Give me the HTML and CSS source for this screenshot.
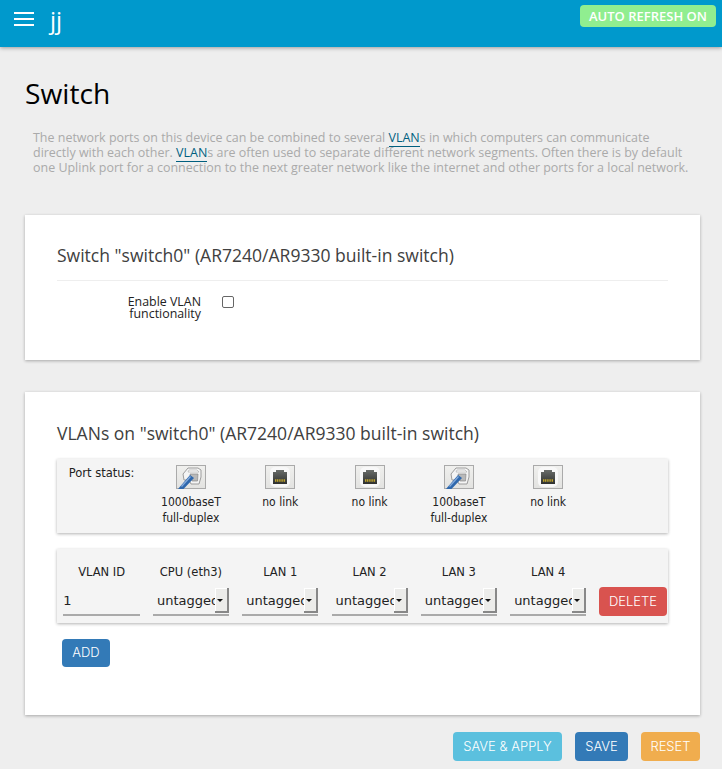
FILE: index.html
```html
<!DOCTYPE html>
<html lang="en">
<head>
<meta charset="utf-8">
<title>Switch</title>
<link rel="stylesheet" href="styles.css">
</head>
<body>
<header class="topbar">
  <div class="burger"><span></span><span></span><span></span></div>
  <div class="hostname">jj</div>
  <button class="refresh">AUTO REFRESH ON</button>
</header>
<main class="main">
  <h1 class="title">Switch</h1>
  <p class="desc">The network ports on this device can be combined to several <abbr>VLAN</abbr>s in which computers can communicate directly with each other. <abbr>VLAN</abbr>s are often used to separate different network segments. Often there is by default one Uplink port for a connection to the next greater network like the internet and other ports for a local network.</p>

  <section class="card card-a">
    <h2 class="card-title ruled">Switch "switch0" (AR7240/AR9330 built-in switch)</h2>
    <div class="field">
      <label class="field-label">Enable VLAN functionality</label>
      <span class="check"></span>
    </div>
  </section>

  <section class="card card-b">
    <h2 class="card-title">VLANs on "switch0" (AR7240/AR9330 built-in switch)</h2>
    <div class="panel ports">
      <div class="cell">Port status:</div>
      <div class="cell"><svg class="port" viewBox="0 0 30 24"><use href="#up"/></svg><small>1000baseT<br>full-duplex</small></div>
      <div class="cell"><svg class="port" viewBox="0 0 30 24"><use href="#down"/></svg><small>no link</small></div>
      <div class="cell"><svg class="port" viewBox="0 0 30 24"><use href="#down"/></svg><small>no link</small></div>
      <div class="cell"><svg class="port" viewBox="0 0 30 24"><use href="#up"/></svg><small>100baseT<br>full-duplex</small></div>
      <div class="cell"><svg class="port" viewBox="0 0 30 24"><use href="#down"/></svg><small>no link</small></div>
    </div>
    <div class="panel vlans">
      <div class="head">VLAN ID</div>
      <div class="head">CPU (eth3)</div>
      <div class="head">LAN 1</div>
      <div class="head">LAN 2</div>
      <div class="head">LAN 3</div>
      <div class="head">LAN 4</div>
      <div class="head"></div>
      <div class="ctl"><input class="vid" value="1"></div>
      <div class="ctl"><div class="sel">untagged<i></i></div></div>
      <div class="ctl"><div class="sel">untagged<i></i></div></div>
      <div class="ctl"><div class="sel">untagged<i></i></div></div>
      <div class="ctl"><div class="sel">untagged<i></i></div></div>
      <div class="ctl"><div class="sel">untagged<i></i></div></div>
      <div class="ctl end"><button class="btn red">DELETE</button></div>
    </div>
    <button class="btn blue add">ADD</button>
  </section>

  <footer class="actions">
    <button class="btn cyan">SAVE &amp; APPLY</button>
    <button class="btn blue">SAVE</button>
    <button class="btn orange">RESET</button>
  </footer>
</main>
<svg class="defs" width="0" height="0">
  <defs>
    <linearGradient id="bg" x1="0" y1="0" x2="0" y2="1">
      <stop offset="0" stop-color="#f0f0ee"/>
      <stop offset="1" stop-color="#e2e2e0"/>
    </linearGradient>
    <linearGradient id="jack" x1="0" y1="0" x2="0" y2="1">
      <stop offset="0" stop-color="#6a6d6a"/>
      <stop offset="1" stop-color="#2f312f"/>
    </linearGradient>
    <g id="up">
      <rect x="0.5" y="0.5" width="29" height="23" fill="url(#bg)" stroke="#aaa"/>
      <path d="M7 9 L12 3 H22 L25 5 V12 L23 19 H15 L13 15 H8 Z" fill="#f4f4f4" stroke="#9c9c9c"/>
      <path d="M13 5 H21 L23 7 H12 Z" fill="#ffffff" stroke="#b0b0b0" stroke-width=".7"/>
      <path d="M14 9 H22 L21.5 16 H16 Z" fill="#b9b9b9" stroke="#8a8a8a" stroke-width=".7"/>
      <path d="M2 24 L14 10 L18 13 L7.5 24 Z" fill="#2f68ad"/>
      <path d="M5.5 21.5 L14.5 11.5" stroke="#86abdb" stroke-width="1.2" fill="none"/>
    </g>
    <g id="down">
      <rect x="0.5" y="0.5" width="29" height="23" fill="url(#bg)" stroke="#aaa"/>
      <rect x="5" y="2" width="20" height="20" rx="5" fill="#f8f8f8"/>
      <path d="M11 5 H19 V7 H22 V19 H8 V7 H11 Z" fill="url(#jack)"/>
      <path d="M10 15.5 H20" stroke="#c2a52a" stroke-width="2.4" stroke-dasharray="1.2 .6" fill="none"/>
    </g>
  </defs>
</svg>
</body>
</html>
```
FILE: styles.css
```css
* { box-sizing: border-box; }
html, body { margin: 0; padding: 0; }
body {
  width: 722px;
  height: 769px;
  overflow: hidden;
  background: #eeeeee;
  font-family: "Open Sans", "Noto Sans", sans-serif;
  color: #000;
}
.defs { display: block; height: 0; }
.topbar {
  height: 47px;
  background: #0099cc;
  box-shadow: 0 1px 4px rgba(0,0,0,.35);
  display: flex;
  align-items: flex-start;
  padding: 5px 6px 0 14px;
  color: #fff;
}
.burger {
  width: 20px;
  display: flex;
  flex-direction: column;
  gap: 4px;
  margin-top: 7px;
}
.burger span { display: block; height: 2px; background: #fff; }
.hostname {
  margin-left: 16px;
  font-size: 24px;
  line-height: 30px;
  font-weight: 400;
}
.refresh {
  margin-left: auto;
  width: 136px;
  height: 22px;
  border: 0;
  border-radius: 4px;
  background: #90ee90;
  color: #fff;
  font: 600 13px/22px "Open Sans", sans-serif;
  padding: 0;
}
.main { padding: 0 22px 0 25px; }
.title {
  margin: 26px 0 0;
  font-size: 28.2px;
  line-height: 40px;
  font-weight: 400;
}
.desc {
  margin: 17px 0 0 8px;
  font-size: 12.47px;
  line-height: 15px;
  color: #aaaaaa;
  width: 660px;
}
abbr {
  color: #005f7f;
  border-bottom: 1px solid #005f7f;
  text-decoration: none;
}
.card {
  background: #fff;
  box-shadow: 0 1px 3px rgba(0,0,0,.3);
  padding: 0 32px;
}
.card-a { margin-top: 40px; height: 145px; padding-top: 27px; }
.card-b { margin-top: 32px; height: 323px; padding-top: 28px; }
.card-title {
  margin: 0;
  font-size: 17.55px;
  line-height: 26px;
  font-weight: 400;
  color: #404040;
}
.ruled { border-bottom: 1px solid #eee; padding-bottom: 12px; }
.field { display: flex; margin-top: 15px; }
.field-label {
  width: 144px;
  padding-left: 60px;
  text-align: right;
  font-size: 12.4px;
  line-height: 12px;
  color: #222;
}
.check {
  width: 12px;
  height: 12px;
  margin-left: 21px;
  border: 1px solid #666;
  border-radius: 2px;
  background: #fff;
}
.panel {
  width: 611px;
  background: #f4f4f4;
  box-shadow: 0 1px 3px rgba(0,0,0,.3);
  display: grid;
  grid-template-columns: repeat(6, 89.3px) 1fr;
  align-content: start;
  font-family: "DejaVu Sans Condensed", "DejaVu Sans", sans-serif;
  font-stretch: condensed;
  font-size: 12.8px;
  color: #222;
}
.ports { margin-top: 13px; height: 74px; padding-top: 6px; }
.cell {
  display: flex;
  flex-direction: column;
  align-items: center;
  text-align: center;
  line-height: 16px;
}
.cell small { font-size: 12px; }
.port { width: 30px; height: 24px; display: block; margin-bottom: 5px; }
.vlans { margin-top: 16px; height: 74px; padding-top: 15px; }
.head { text-align: center; line-height: 16px; height: 23px; }
.ctl { display: flex; justify-content: center; }
.end { justify-content: flex-end; padding-right: 1px; }
.vid, .sel {
  height: 29px;
  background: transparent;
  border: 0;
  border-bottom: 2px solid #aaa;
  font: 13px "DejaVu Sans", sans-serif;
  color: #222;
}
.vid { width: 77px; padding: 0; outline: 0; }
.sel {
  width: 76px;
  position: relative;
  overflow: hidden;
  padding-left: 4px;
  line-height: 27px;
  white-space: nowrap;
}
.sel i {
  position: absolute;
  top: 1px;
  right: 0;
  width: 14px;
  height: 25px;
  background: #ececea;
  border-right: 2px solid #888;
  border-bottom: 2px solid #888;
  box-shadow: inset 1px 1px 0 #fff;
}
.sel i::after {
  content: "";
  position: absolute;
  left: 2px;
  top: 11px;
  border: 3.5px solid transparent;
  border-top-color: #111;
  border-bottom: 0;
}
.btn {
  border: 0;
  border-radius: 4px;
  color: #fff;
  font: 300 13px "Inter", sans-serif;
  height: 29px;
  padding: 0 10px 2px;
}
.red { background: #d9534f; width: 68px; padding: 0 0 2px; }
.blue { background: #337ab7; }
.cyan { background: #5bc0de; }
.orange { background: #f0ad4e; }
.add { margin: 16px 0 0 5px; width: 48px; height: 28px; padding: 0 0 2px; }
.actions {
  margin-top: 17px;
  display: flex;
  justify-content: flex-end;
  gap: 13px;
}
.actions .cyan { width: 109px; padding: 0 0 2px; }
.actions .blue { width: 53px; padding: 0 0 2px; }
.actions .orange { width: 59px; padding: 0 0 2px; }
```
